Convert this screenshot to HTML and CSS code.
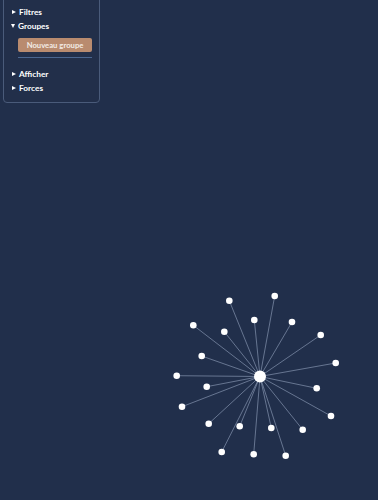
FILE: index.html
```html
<!DOCTYPE html>
<html>
<head>
<meta charset="utf-8">
<link rel="stylesheet" href="styles.css">
</head>
<body>
<div class="panel">
  <div class="item"><span class="tri right"></span>Filtres</div>
  <div class="item"><span class="tri down"></span>Groupes</div>
  <div class="group-body">
    <div class="btn">Nouveau groupe</div>
    <div class="sep"></div>
  </div>
  <div class="item"><span class="tri right"></span>Afficher</div>
  <div class="item"><span class="tri right"></span>Forces</div>
</div>
<svg class="graph" width="378" height="500" viewBox="0 0 378 500">
  <g stroke="#97a5c0" stroke-width="0.7" stroke-opacity="0.85">
    <line x1="260" y1="376.5" x2="229.3" y2="300.7"/>
    <line x1="260" y1="376.5" x2="274.7" y2="296"/>
    <line x1="260" y1="376.5" x2="193.3" y2="325.3"/>
    <line x1="260" y1="376.5" x2="224.3" y2="331.7"/>
    <line x1="260" y1="376.5" x2="254.3" y2="320"/>
    <line x1="260" y1="376.5" x2="292" y2="322"/>
    <line x1="260" y1="376.5" x2="320.7" y2="335"/>
    <line x1="260" y1="376.5" x2="201.7" y2="356"/>
    <line x1="260" y1="376.5" x2="335.7" y2="363"/>
    <line x1="260" y1="376.5" x2="176.7" y2="375.7"/>
    <line x1="260" y1="376.5" x2="206.7" y2="386.7"/>
    <line x1="260" y1="376.5" x2="316.7" y2="388.3"/>
    <line x1="260" y1="376.5" x2="182" y2="406.7"/>
    <line x1="260" y1="376.5" x2="331" y2="416"/>
    <line x1="260" y1="376.5" x2="208.7" y2="423.7"/>
    <line x1="260" y1="376.5" x2="239.7" y2="426.3"/>
    <line x1="260" y1="376.5" x2="271.3" y2="428"/>
    <line x1="260" y1="376.5" x2="302.7" y2="429.7"/>
    <line x1="260" y1="376.5" x2="221.7" y2="452"/>
    <line x1="260" y1="376.5" x2="253.7" y2="454.3"/>
    <line x1="260" y1="376.5" x2="285.7" y2="455.7"/>
  </g>
  <g fill="#ffffff">
    <circle cx="229.3" cy="300.7" r="3.3"/>
    <circle cx="274.7" cy="296" r="3.3"/>
    <circle cx="193.3" cy="325.3" r="3.3"/>
    <circle cx="224.3" cy="331.7" r="3.3"/>
    <circle cx="254.3" cy="320" r="3.3"/>
    <circle cx="292" cy="322" r="3.3"/>
    <circle cx="320.7" cy="335" r="3.3"/>
    <circle cx="201.7" cy="356" r="3.3"/>
    <circle cx="335.7" cy="363" r="3.3"/>
    <circle cx="176.7" cy="375.7" r="3.3"/>
    <circle cx="206.7" cy="386.7" r="3.3"/>
    <circle cx="316.7" cy="388.3" r="3.3"/>
    <circle cx="182" cy="406.7" r="3.3"/>
    <circle cx="331" cy="416" r="3.3"/>
    <circle cx="208.7" cy="423.7" r="3.3"/>
    <circle cx="239.7" cy="426.3" r="3.3"/>
    <circle cx="271.3" cy="428" r="3.3"/>
    <circle cx="302.7" cy="429.7" r="3.3"/>
    <circle cx="221.7" cy="452" r="3.3"/>
    <circle cx="253.7" cy="454.3" r="3.3"/>
    <circle cx="285.7" cy="455.7" r="3.3"/>
    <circle cx="260" cy="376.5" r="6"/>
  </g>
</svg>
</body>
</html>
```
FILE: styles.css
```css
html, body {
  margin: 0;
  padding: 0;
  background: #212f4b;
  width: 378px;
  height: 500px;
  overflow: hidden;
  font-family: Lato, "Noto Sans", sans-serif;
}
.graph {
  position: absolute;
  left: 0;
  top: 0;
  z-index: 0;
}
.panel {
  position: absolute;
  left: 3px;
  top: -10px;
  width: 97px;
  height: 113px;
  box-sizing: border-box;
  border: 1px solid #4a5b7a;
  border-radius: 4px;
  background: #222f4a;
  z-index: 1;
  padding: 14px 0 0 7px;
  display: flex;
  flex-direction: column;
}
.item {
  display: flex;
  align-items: center;
  height: 14px;
  color: #ffffff;
  font-size: 8.3px;
  font-weight: bold;
}
.tri {
  width: 0;
  height: 0;
}
.tri.right {
  border-top: 2.5px solid transparent;
  border-bottom: 2.5px solid transparent;
  border-left: 4px solid #ffffff;
  margin-left: 1px;
  margin-right: 3px;
}
.tri.down {
  border-left: 2.5px solid transparent;
  border-right: 2.5px solid transparent;
  border-top: 4px solid #ffffff;
  margin-right: 3px;
}
.group-body {
  padding: 5px 0 9px 7px;
  display: flex;
  flex-direction: column;
}
.btn {
  width: 74px;
  height: 14px;
  background: #b98b6f;
  border-radius: 2px;
  color: #f3ece6;
  font-size: 7.7px;
  font-weight: bold;
  display: flex;
  align-items: center;
  justify-content: center;
}
.sep {
  width: 74px;
  height: 1px;
  background: #4a6690;
  margin-top: 5px;
}
```
